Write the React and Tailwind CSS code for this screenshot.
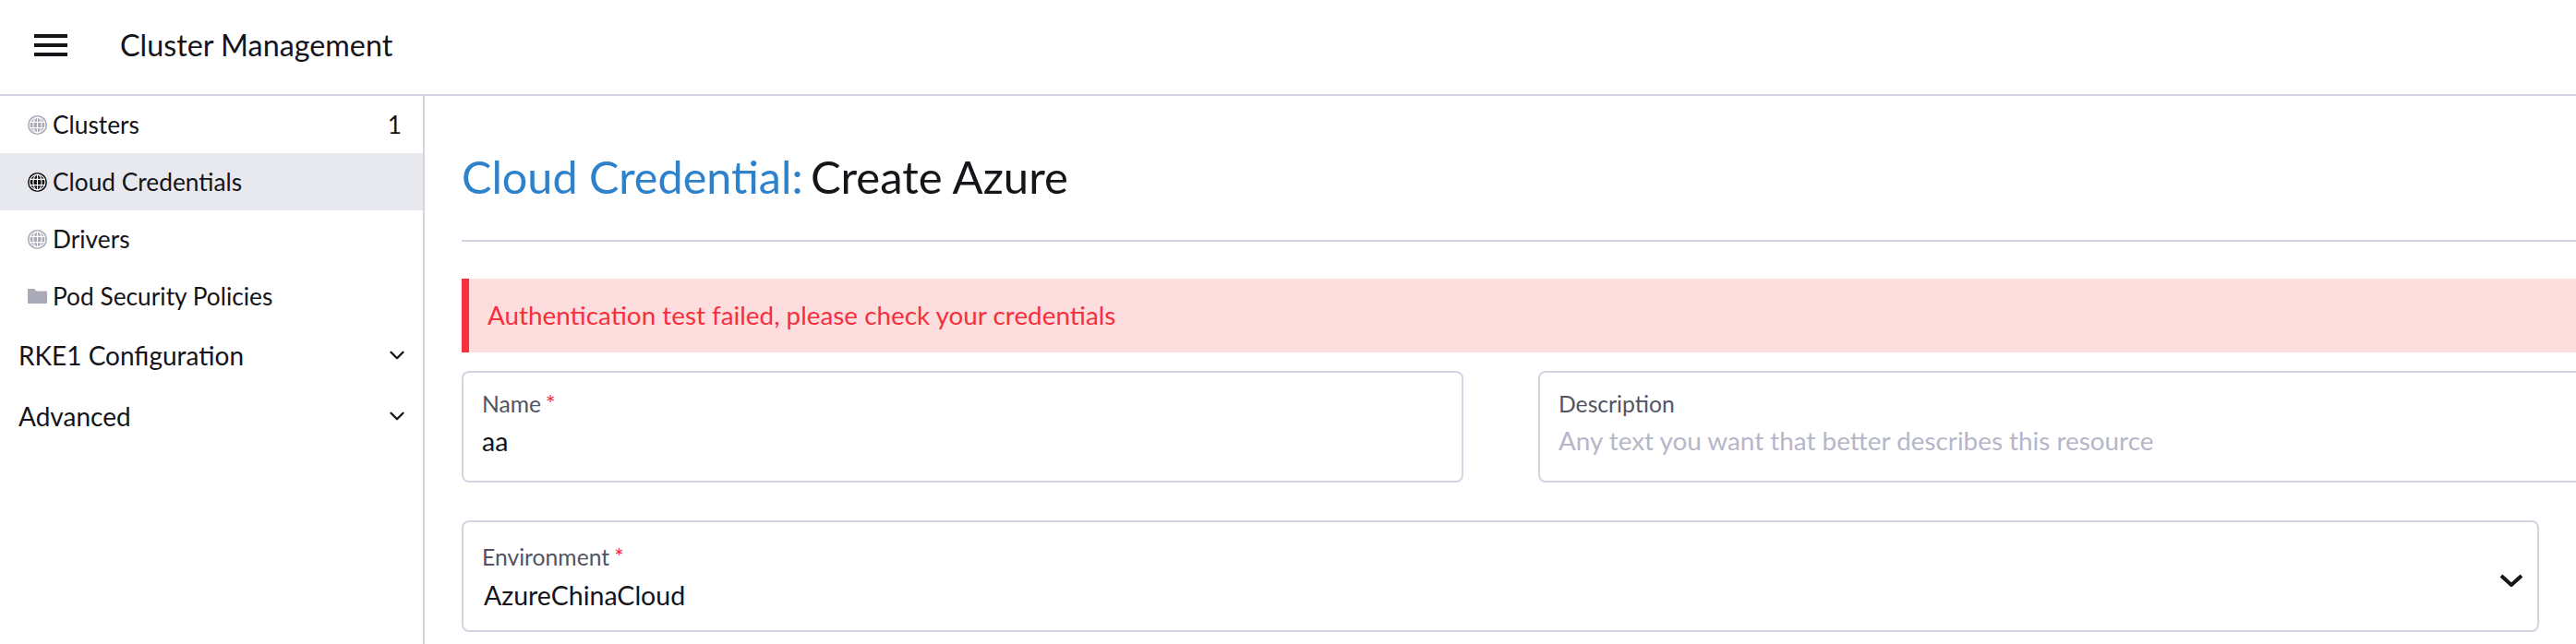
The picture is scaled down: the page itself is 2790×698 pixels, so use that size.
import { ChevronDown } from 'lucide-react'

function GlobeIcon({ className }) {
  return (
    <svg viewBox="0 0 21 21" className={className}>
      <circle cx="10.5" cy="10.5" r="10.5" fill="currentColor" />
      <g fill="none" stroke="#fff" strokeWidth="1.1">
        <ellipse cx="10.5" cy="10.5" rx="4.6" ry="8.4" />
        <circle cx="10.5" cy="10.5" r="8.4" />
        <path d="M10.5 2v17M2 7.4h17M2 13.6h17" />
      </g>
    </svg>
  )
}

function FolderIcon() {
  return (
    <svg viewBox="0 0 21 16" className="w-[21px] h-[16px] text-[#a9a9b8]">
      <path d="M0 1a1 1 0 0 1 1-1h6l2.5 2.5H20a1 1 0 0 1 1 1V15a1 1 0 0 1-1 1H1a1 1 0 0 1-1-1z" fill="currentColor" />
    </svg>
  )
}

function NavItem({ icon, label, count, active }) {
  return (
    <div className={`flex items-center h-[62px] pl-[30px] pr-[23px] ${active ? 'bg-[#e8e9ee]' : ''}`}>
      <span className="w-[27px] shrink-0 flex items-center">{icon}</span>
      <span className="flex-1 pt-[1px] text-[26.3px] text-[#141419]">{label}</span>
      {count && <span className="pt-[1px] text-[26.3px] text-[#141419]">{count}</span>}
    </div>
  )
}

function NavGroup({ label }) {
  return (
    <div className="flex items-center justify-between h-[66px] pl-[20px] pr-[15px]">
      <span className="text-[28px] text-[#141419]">{label}</span>
      <ChevronDown className="w-[26px] h-[26px] text-[#141419]" strokeWidth={2.2} />
    </div>
  )
}

function Field({ label, required, className, children }) {
  return (
    <div className={`h-[121px] border-2 border-[#d3d5e2] rounded-[8px] pl-[20px] ${className}`}>
      <div className="text-[24.7px] leading-[30px] text-[#545461]">
        {label}
        {required && <span className="text-[#f5303c] ml-[5px]">*</span>}
      </div>
      {children}
    </div>
  )
}

export default function App() {
  return (
    <div className="h-screen overflow-hidden bg-white font-['Lato','Liberation_Sans',sans-serif]">
      <header className="flex items-center h-[104px] border-b-2 border-[#d3d5e2] pl-[37px] pb-[4px]">
        <div className="flex flex-col gap-[6px] w-[36px]">
          <span className="h-[4px] bg-[#141419]" />
          <span className="h-[4px] bg-[#141419]" />
          <span className="h-[4px] bg-[#141419]" />
        </div>
        <span className="ml-[57px] text-[32.3px] text-[#141419]">Cluster Management</span>
      </header>

      <div className="flex h-[594px]">
        <aside className="w-[460px] shrink-0 border-r-2 border-[#d3d5e2]">
          <NavItem icon={<GlobeIcon className="w-[21px] h-[21px] text-[#a9a9b8]" />} label="Clusters" count="1" />
          <NavItem icon={<GlobeIcon className="w-[21px] h-[21px] text-[#141419]" />} label="Cloud Credentials" active />
          <NavItem icon={<GlobeIcon className="w-[21px] h-[21px] text-[#a9a9b8]" />} label="Drivers" />
          <NavItem icon={<FolderIcon />} label="Pod Security Policies" />
          <NavGroup label="RKE1 Configuration" />
          <NavGroup label="Advanced" />
        </aside>

        <main className="pl-[40px] w-[2700px] shrink-0">
          <div className="h-[158px] border-b-2 border-[#d3d5e2] pt-[57px]">
            <h1 className="text-[48.5px] leading-[60px] text-[#141419]">
              <span className="text-[#2e82cb]">Cloud Credential:</span>{' '}
              <span className="ml-[-4px] text-[49px]">Create Azure</span>
            </h1>
          </div>

          <div className="mt-[40px] h-[80px] flex items-center bg-[#fddddd] border-l-[8px] border-[#f5303c] pl-[20px] text-[27.85px] text-[#f5303c]">
            Authentication test failed, please check your credentials
          </div>

          <div className="flex gap-[81px] mt-[20px]">
            <Field label="Name" required className="w-[1085px] shrink-0 pt-[19px]">
              <div className="text-[28.5px] leading-[40px] text-[#141419] mt-[5px]">aa</div>
            </Field>
            <Field label="Description" className="flex-1 pt-[19px]">
              <div className="text-[27.85px] leading-[40px] text-[#b6b6c8] mt-[5px]">Any text you want that better describes this resource</div>
            </Field>
          </div>

          <Field label="Environment" required className="relative mt-[41px] w-[2250px] pt-[23px]">
            <div className="text-[28.5px] leading-[40px] text-[#141419] mt-[6px] pl-[2px]">AzureChinaCloud</div>
            <svg viewBox="0 0 26 14" className="absolute right-[15px] top-[56px] w-[26px] h-[14px] text-[#141419]">
              <path d="M2 2l11 10L24 2" fill="none" stroke="currentColor" strokeWidth="4" />
            </svg>
          </Field>
        </main>
      </div>
    </div>
  )
}
